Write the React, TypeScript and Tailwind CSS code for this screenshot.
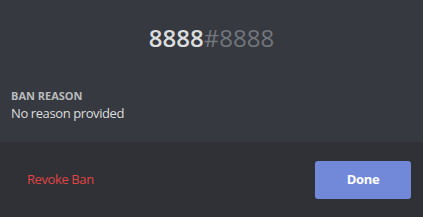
export default function App() {
  return (
    <div className="flex h-[217px] w-[423px] flex-col font-['Open_Sans',sans-serif]">
      <div className="flex h-[142px] flex-col bg-[#36393f] px-[11px]">
        <div className="mt-[24px] flex justify-center text-[24px] leading-[28px]">
          <span className="font-semibold text-[#dcddde]">8888</span>
          <span className="text-[#72767d]">#8888</span>
        </div>
        <div className="mt-[37px] text-[11px] font-bold uppercase leading-[14px] text-[#b9bbbe]">
          Ban Reason
        </div>
        <div className="mt-px text-[13px] leading-[18px] tracking-[-0.4px] text-[#dcddde]">
          No reason provided
        </div>
      </div>
      <div className="flex flex-1 items-center justify-between bg-[#2f3136] pl-[27px] pr-[12px]">
        <button className="text-[13px] tracking-[-0.4px] text-[#e04444]">Revoke Ban</button>
        <button className="h-[38px] w-[96px] rounded-[3px] bg-[#7289da] text-[13px] font-bold tracking-[-0.3px] text-white">
          Done
        </button>
      </div>
    </div>
  );
}
